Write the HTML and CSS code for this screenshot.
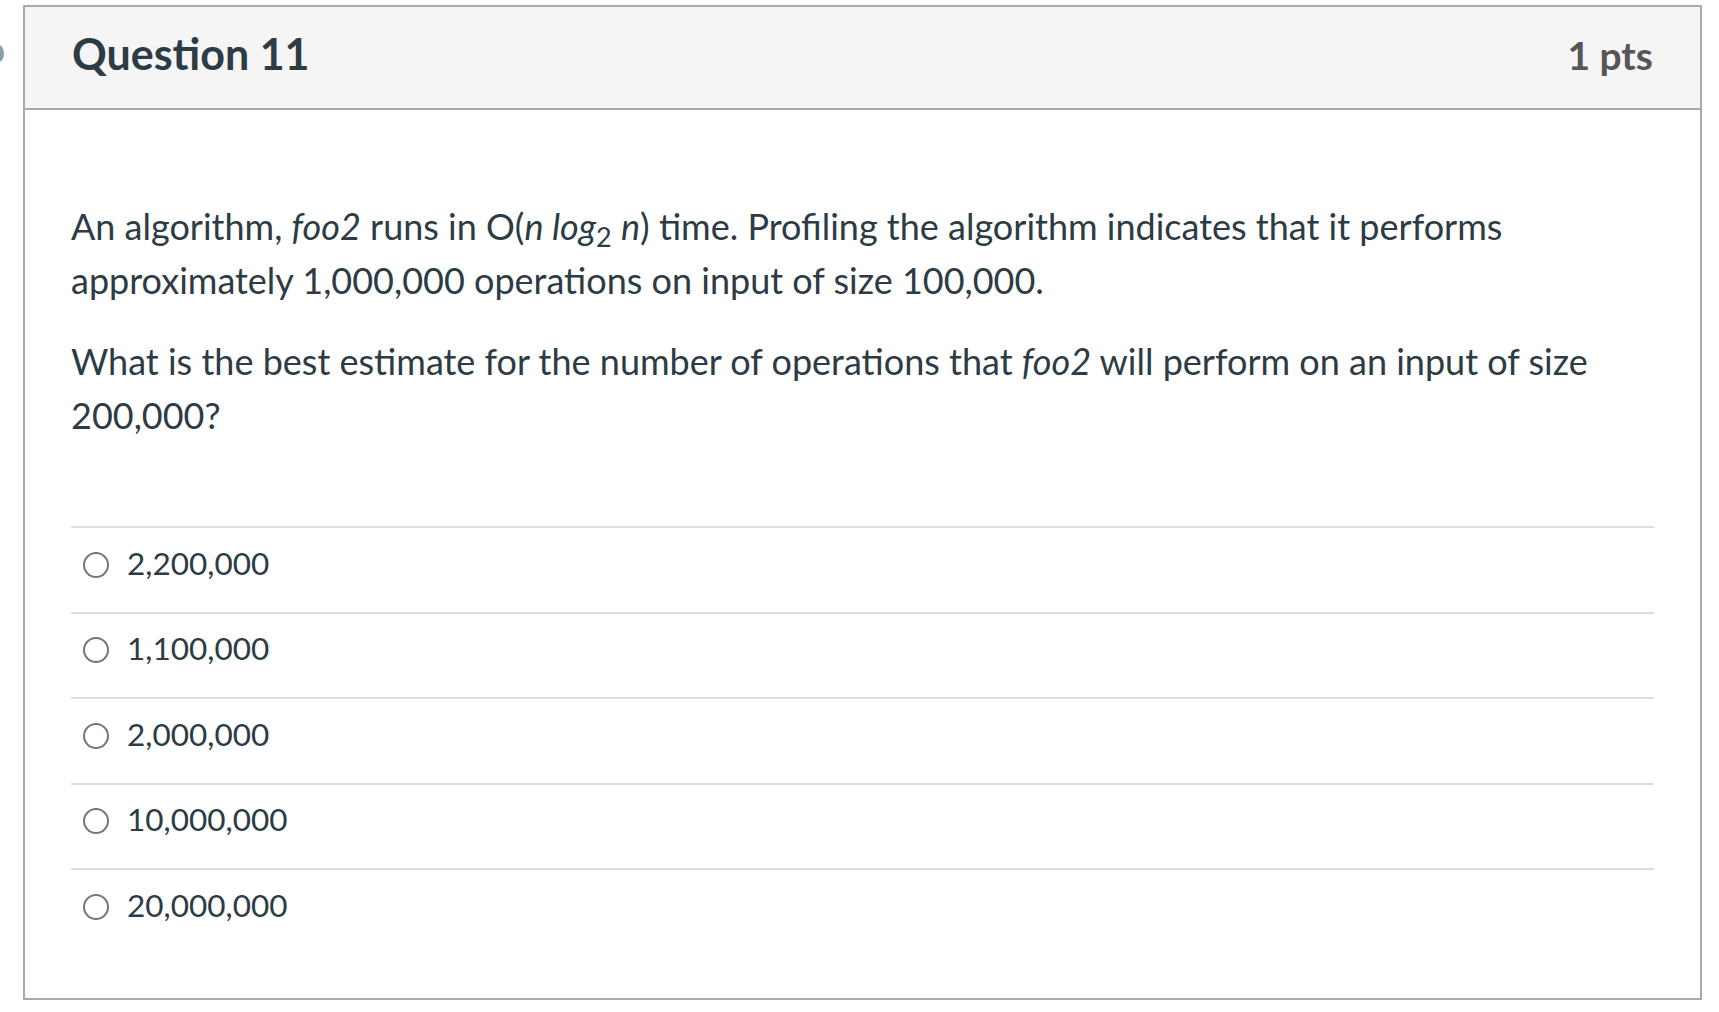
FILE: index.html
```html
<!DOCTYPE html>
<html lang="en">
<head>
<meta charset="utf-8">
<title>Question 11</title>
<link rel="stylesheet" href="styles.css">
</head>
<body>
<div class="edge-marker"></div>
<div class="question">
  <div class="header">
    <span class="name">Question 11</span>
    <span class="points">1 pts</span>
  </div>
  <div class="content">
    <div class="text">
      <p>An algorithm, <em>foo2</em> runs in O(<em>n log</em><sub>2</sub> <em>n</em>) time. Profiling the algorithm indicates that it performs approximately 1,000,000 operations on input of size 100,000.</p>
      <p>What is the best estimate for the number of operations that <em>foo2</em> will perform on an input of size 200,000?</p>
    </div>
    <div class="answers">
      <label class="answer"><span class="radio"></span><span class="label">2,200,000</span></label>
      <label class="answer"><span class="radio"></span><span class="label">1,100,000</span></label>
      <label class="answer"><span class="radio"></span><span class="label">2,000,000</span></label>
      <label class="answer"><span class="radio"></span><span class="label">10,000,000</span></label>
      <label class="answer"><span class="radio"></span><span class="label">20,000,000</span></label>
    </div>
  </div>
</div>
</body>
</html>
```

FILE: styles.css
```css
html, body {
  margin: 0;
  padding: 0;
  background: #ffffff;
}
body {
  font-family: Lato, "Noto Sans", sans-serif;
  color: #2d3b45;
  position: relative;
}
.edge-marker {
  position: absolute;
  left: -7px;
  top: 45px;
  width: 11px;
  height: 17px;
  border-radius: 50%;
  background: #8a9dab;
}
.question {
  margin: 5px 0 0 23px;
  width: 1675px;
  height: 991px;
  border: 2px solid #aaaaaa;
  box-sizing: content-box;
}
.header {
  display: flex;
  justify-content: space-between;
  align-items: baseline;
  background: #f5f5f5;
  border-bottom: 2px solid #aaaaaa;
  box-sizing: border-box;
  height: 103px;
  padding: 21px 47px 0 47px;
}
.name {
  font-weight: 700;
  font-size: 43px;
  line-height: 52px;
  color: #2d3b45;
}
.points {
  font-weight: 700;
  font-size: 39px;
  line-height: 52px;
  color: #565656;
}
.content {
  padding: 89px 46px 0 46px;
}
.text p {
  margin: 0 0 27px 0;
  font-size: 36px;
  line-height: 54px;
}
.text p:last-child {
  margin-bottom: 0;
}
.text sub {
  font-size: 0.75em;
  vertical-align: -0.25em;
  line-height: 0;
}
.answers {
  margin-top: 84px;
}
.answer {
  display: flex;
  align-items: center;
  border-top: 2px solid #dddddd;
  height: 85.5px;
  box-sizing: border-box;
  padding: 0 0 10px 12px;
}
.radio {
  width: 26px;
  height: 26px;
  border: 2px solid #777777;
  border-radius: 50%;
  box-sizing: border-box;
  flex: none;
  margin-right: 18px;
}
.label {
  font-size: 31.5px;
  line-height: 40px;
  margin-bottom: 4px;
  color: #2d3b45;
}
```
